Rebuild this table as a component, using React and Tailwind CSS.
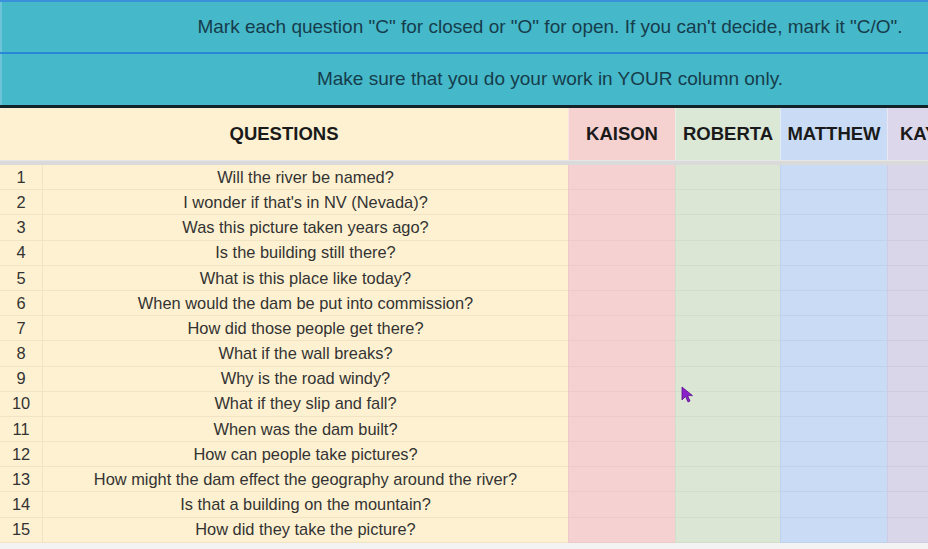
import { useState } from "react"

const questions = [
  "Will the river be named?",
  "I wonder if that's in NV (Nevada)?",
  "Was this picture taken years ago?",
  "Is the building still there?",
  "What is this place like today?",
  "When would the dam be put into commission?",
  "How did those people get there?",
  "What if the wall breaks?",
  "Why is the road windy?",
  "What if they slip and fall?",
  "When was the dam built?",
  "How can people take pictures?",
  "How might the dam effect the geography around the river?",
  "Is that a building on the mountain?",
  "How did they take the picture?",
]

const students = [
  { name: "KAISON", head: "bg-[#f5d1d0]", cell: "bg-[#f5d2d1] border-[#edc9c8]" },
  { name: "ROBERTA", head: "bg-[#dbe8d5]", cell: "bg-[#dbe7d4] border-[#d1dfca]" },
  { name: "MATTHEW", head: "bg-[#cadcf5]", cell: "bg-[#c9dbf5] border-[#bfd2ec]" },
  { name: "KAYLA", head: "bg-[#dcd7ea]", cell: "bg-[#dad6ea] border-[#cfcbe0]" },
]

const Cursor = () => (
  <svg width="14" height="18" viewBox="0 0 14 18" className="absolute left-[681px] top-[386px]">
    <path d="M1 1 L1 14 L4.5 10.5 L7 16 L9 15 L6.6 9.6 L11.5 9.6 Z" fill="#8b1fc9" stroke="#5a1290" strokeWidth="0.8" />
  </svg>
)

export default function App() {
  const [marks] = useState({})
  return (
    <div className="relative w-[928px] h-[549px] overflow-hidden bg-[#f3f3f3] font-['Liberation_Sans',Arial,sans-serif]">
      <div className="h-[2px] bg-[#3b90dc]" />
      <div className="h-[50px] bg-[#45b8c9] border-l-2 border-[#6cc4d9] flex items-center justify-center pl-[170px] text-[19px] text-[#163d4c] whitespace-nowrap">
        Mark each question "C" for closed or "O" for open. If you can't decide, mark it "C/O".
      </div>
      <div className="h-[2px] bg-[#2a86d6]" />
      <div className="h-[51px] bg-[#45b8c9] border-l-2 border-[#6cc4d9] flex items-center justify-center pl-[170px] text-[19px] text-[#163d4c]">
        Make sure that you do your work in YOUR column only.
      </div>
      <div className="h-[3px] bg-[#12232a]" />

      <div className="grid grid-cols-[43px_525px_107px_105px_107px_41px]">
        <div className="col-span-2 h-[52px] bg-[#fdf1d1] flex items-center justify-center font-bold text-[18.5px] text-[#1a1a1a]">
          QUESTIONS
        </div>
        {students.map((s) => (
          <div key={s.name} className={`${s.head} h-[52px] flex items-center justify-center font-bold text-[18.5px] text-[#1a1a1a] whitespace-nowrap overflow-hidden border-l border-white/40`}>
            <span className={s.name === "KAYLA" ? "pl-[12px] w-full" : ""}>{s.name}</span>
          </div>
        ))}
        <div className="col-span-6 h-[5px] bg-[#dadada] border-t border-[#e6e6e6]" />

        {questions.map((q, i) => (
          <div key={i} className="contents">
            <div className="h-[25.2px] bg-[#fdf1d1] border-b border-r border-[#f0e4c5] flex items-center justify-center text-[16.4px] text-[#333]">
              {i + 1}
            </div>
            <div className="h-[25.2px] bg-[#fdf1d1] border-b border-[#f0e4c5] flex items-center justify-center text-[16.4px] text-[#333] whitespace-nowrap">
              {q}
            </div>
            {students.map((s) => (
              <div key={s.name} className={`${s.cell} h-[25.2px] border-b border-l text-[15px] flex items-center justify-center`}>
                {marks[`${i}-${s.name}`] || ""}
              </div>
            ))}
          </div>
        ))}
      </div>
      <Cursor />
    </div>
  )
}
